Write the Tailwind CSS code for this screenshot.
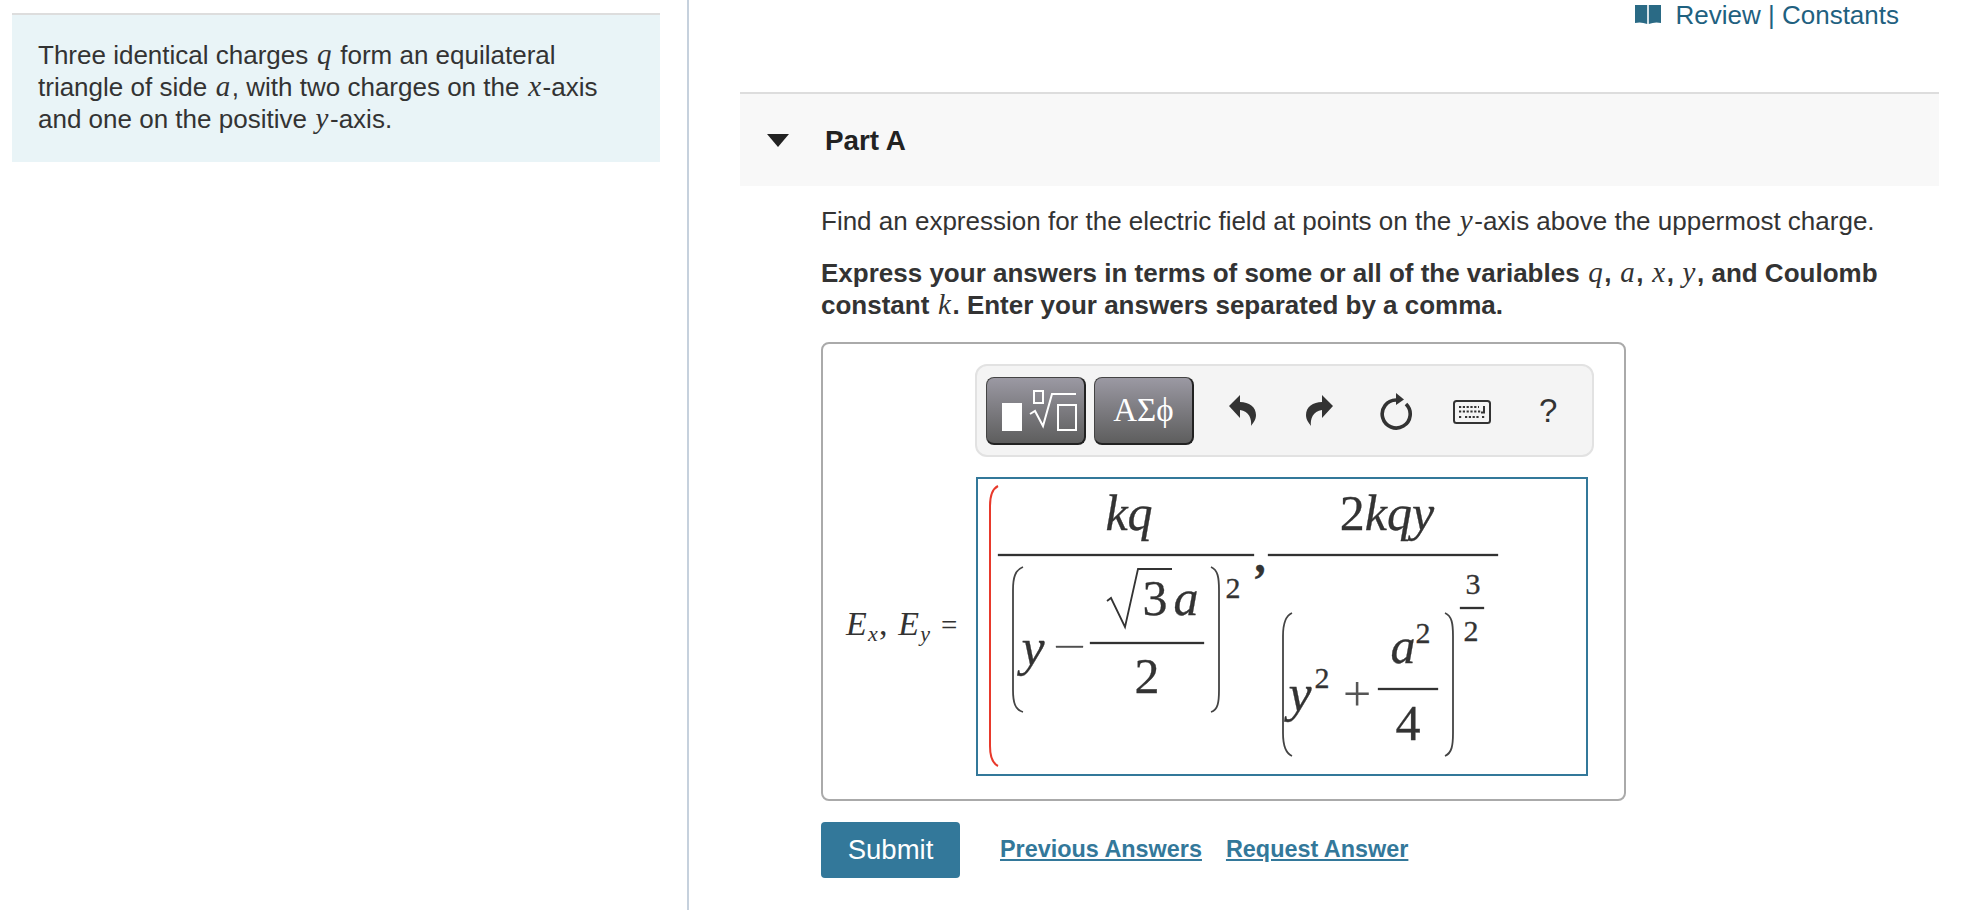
<!DOCTYPE html>
<html lang="en">
<head>
  <meta charset="UTF-8" />
  <meta name="viewport" content="width=device-width, initial-scale=1.0" />
  <title>Part A</title>
  <script src="https://cdn.jsdelivr.net/npm/@tailwindcss/browser@4"></script>
</head>
<body class="bg-white text-[#333] font-['Liberation_Sans',sans-serif] text-[26px] leading-[32px] h-[910px] overflow-hidden">
  <div class="flex h-[910px]">

    <!-- Intro column -->
    <aside class="w-[689px] shrink-0 border-r-2 border-[#c6d1dd] pt-[13px] pl-3">
      <div class="w-[648px] h-[149px] bg-[#e9f4f7] border-t-2 border-[#dddddd] pt-[24px] pl-[26px]">
        <p>Three identical charges <i class="font-['Liberation_Serif',serif] text-[29px] leading-none mx-[1.5px]">q</i> form an equilateral<br>triangle of side <i class="font-['Liberation_Serif',serif] text-[29px] leading-none mx-[1.5px]">a</i>, with two charges on the <i class="font-['Liberation_Serif',serif] text-[29px] leading-none mx-[1.5px]">x</i>-axis<br>and one on the positive <i class="font-['Liberation_Serif',serif] text-[29px] leading-none mx-[1.5px]">y</i>-axis.</p>
      </div>
    </aside>

    <!-- Question column -->
    <main class="flex-1 relative">
      <div class="h-[92px] flex justify-end pr-[67px] text-[#1f6180] text-[26px] leading-[30px]">
        <div class="flex items-start gap-[14px]">
          <svg class="mt-[5px]" width="26" height="19" viewBox="0 0 26 19"><path d="M0 0H12.2V19Q6 16.5 0 18Z" fill="#2a6a85"/><path d="M13.8 0H26V18Q20 16.5 13.8 19Z" fill="#2a6a85"/></svg>
          <span>Review | Constants</span>
        </div>
      </div>

      <header class="ml-[51px] mr-[27px] h-[94px] bg-[#f8f8f8] border-t-2 border-[#dddddd] flex items-center">
        <svg class="ml-[27px]" width="22" height="13" viewBox="0 0 22 13"><polygon points="0,0 22,0 11,13" fill="#222"/></svg>
        <h2 class="ml-[36px] mt-[2px] font-bold text-[27.8px] text-[#222]">Part A</h2>
      </header>

      <section class="ml-[132px] w-[1100px]">
        <p class="mt-[19px]">Find an expression for the electric field at points on the <i class="font-['Liberation_Serif',serif] text-[29px] leading-none mx-[1.5px]">y</i>-axis above the uppermost charge.</p>
        <p class="mt-[20px] font-bold">Express your answers in terms of some or all of the variables <i class="font-['Liberation_Serif',serif] text-[29px] leading-none mx-[1.5px] font-normal">q</i>, <i class="font-['Liberation_Serif',serif] text-[29px] leading-none mx-[1.5px] font-normal">a</i>, <i class="font-['Liberation_Serif',serif] text-[29px] leading-none mx-[1.5px] font-normal">x</i>, <i class="font-['Liberation_Serif',serif] text-[29px] leading-none mx-[1.5px] font-normal">y</i>, and Coulomb<br>constant <i class="font-['Liberation_Serif',serif] text-[29px] leading-none mx-[1.5px] font-normal">k</i>. Enter your answers separated by a comma.</p>

        <!-- Answer box -->
        <div class="mt-[21px] w-[805px] h-[459px] border-2 border-[#aaaaaa] rounded-[8px] pt-5">
          <div class="ml-[152px] w-[619px] h-[93px] bg-[#f4f4f4] border-2 border-[#e2e2e2] rounded-[12px] flex items-center pl-[9px]">
            <button class="w-[100px] h-[68px] rounded-[8px] border border-[#444] border-b-2 border-r-2 border-b-[#222] border-r-[#222] bg-gradient-to-b from-[#9b99a3] to-[#5e5e5e]">
              <svg width="95" height="64" viewBox="987 377 95 64">
                <rect x="1002" y="402" width="20" height="28" fill="#fff"/>
                <rect x="1034" y="390" width="9" height="12" fill="none" stroke="#fff" stroke-width="2"/>
                <path d="M1030 413L1035 410L1043 425L1052 393L1076 393" fill="none" stroke="#fff" stroke-width="2"/>
                <rect x="1058" y="404" width="18" height="25" fill="none" stroke="#fff" stroke-width="2"/>
              </svg>
            </button>
            <button class="ml-[8px] w-[100px] h-[68px] rounded-[8px] border border-[#444] border-b-2 border-r-2 border-b-[#222] border-r-[#222] bg-gradient-to-b from-[#9b99a3] to-[#5e5e5e] text-white font-['Liberation_Serif',serif] text-[33px]">ΑΣϕ</button>
            <svg class="ml-[35px]" width="27" height="32" viewBox="0 0 27 32"><path d="M0 11L11 0V7C20 7 27 12 27 20C27 25 24 28 22 31C23 24 20 16 11 15V23Z" fill="#333"/></svg>
            <svg class="ml-[50px]" width="27" height="32" viewBox="0 0 27 32"><path d="M27 11L16 0V7C7 7 0 12 0 20C0 25 3 28 5 31C4 24 7 16 16 15V23Z" fill="#333"/></svg>
            <svg class="ml-[46px] mt-[2px]" width="34" height="38" viewBox="0 0 34 38"><path d="M27 11A14 14 0 1 1 17 7" fill="none" stroke="#333" stroke-width="3.6"/><polygon points="17,0 25,6.500 17,12" fill="#333"/></svg>
            <svg class="ml-[40px] mt-[2px]" width="38" height="24" viewBox="0 0 38 24">
              <rect x="1" y="1" width="36" height="22" rx="2.500" fill="#f4f4f4" stroke="#333" stroke-width="2"/>
              <path d="M6 7H26M6 11.500H28M6 17H9M12 17H26M29 17H32" fill="none" stroke="#333" stroke-width="2.200" stroke-dasharray="2.200 1.600"/>
              <path d="M31 6V12.500H28" fill="none" stroke="#333" stroke-width="2"/>
            </svg>
            <span class="ml-[48px] text-[33px] text-[#333]">?</span>
          </div>

          <div class="mt-5 flex items-center">
            <div class="w-[153px] pl-[23px] mb-1 font-['Liberation_Serif',serif] text-[34px] tracking-[1.2px] text-[#333] whitespace-nowrap"><i>E</i><sub class="text-[22px] italic">x</sub>, <i>E</i><sub class="text-[22px] italic">y</sub> <span class="text-[29px]">=</span></div>
            <div class="w-[612px] h-[299px] border-2 border-[#33789a]">
              <!-- Equation editor draws its expression in an svg, coordinates are page px -->
              <svg class="font-['Liberation_Serif',serif]" width="608" height="295" viewBox="978 479 608 295" fill="#333" stroke="#333" stroke-width="0.3">
                <path d="M998 486C992 489 990 496 990 506L990 746C990 756 992 763 998 766" fill="none" stroke="#e8392b" stroke-width="2"/>

                <text x="1129" y="530" font-size="50" font-style="italic" text-anchor="middle">kq</text>
                <rect x="998" y="554" width="256" height="2"/>
                <path d="M1023 567C1015 570 1013 578 1013 590L1013 690C1013 702 1015 710 1023 712M1211 567C1218 570 1219 578 1219 590L1219 690C1219 702 1218 710 1211 712" fill="none" stroke="#444" stroke-width="1.800"/>
                <text x="1033" y="665" font-size="52" font-style="italic" text-anchor="middle">y</text>
                <rect x="1056" y="646" width="27" height="1.600" fill="#555"/>
                <path d="M1107 601L1111 598L1125 627L1138 569L1172 569" fill="none" stroke="#333" stroke-width="1.800"/>
                <text x="1155" y="615" font-size="50" text-anchor="middle">3</text>
                <text x="1186" y="615" font-size="50" font-style="italic" text-anchor="middle">a</text>
                <rect x="1090" y="642" width="114" height="2"/>
                <text x="1147" y="693" font-size="50" text-anchor="middle">2</text>
                <text x="1233" y="598" font-size="30" text-anchor="middle">2</text>
                <text x="1262" y="572" font-size="46" font-style="italic" font-weight="bold" text-anchor="middle">,</text>

                <text x="1387" y="530" font-size="50" font-style="italic" text-anchor="middle"><tspan font-style="normal">2</tspan>kqy</text>
                <rect x="1268" y="554" width="230" height="2"/>
                <text x="1473" y="594" font-size="30" text-anchor="middle">3</text>
                <rect x="1460" y="607" width="24" height="2"/>
                <text x="1471" y="641" font-size="30" text-anchor="middle">2</text>
                <path d="M1292 613C1285 616 1283 624 1283 636L1283 733C1283 745 1285 753 1292 756M1445 613C1452 616 1453 624 1453 636L1453 733C1453 745 1452 753 1445 756" fill="none" stroke="#444" stroke-width="1.800"/>
                <text x="1300" y="711" font-size="52" font-style="italic" text-anchor="middle">y</text>
                <text x="1322" y="688" font-size="30" text-anchor="middle">2</text>
                <text x="1357" y="711" font-size="50" fill="#555" stroke="none" text-anchor="middle">+</text>
                <text x="1403" y="663" font-size="50" font-style="italic" text-anchor="middle">a</text>
                <text x="1423" y="643" font-size="30" text-anchor="middle">2</text>
                <rect x="1378" y="688" width="60" height="2"/>
                <text x="1408" y="740" font-size="50" text-anchor="middle">4</text>
              </svg>
            </div>
          </div>
        </div>

        <div class="mt-[21px] flex items-center">
          <button class="w-[139px] h-[56px] bg-[#33789a] rounded-[4px] text-white text-[27.5px]">Submit</button>
          <a href="#" class="ml-[40px] mb-[3px] font-bold text-[#33789a] underline text-[23.4px]">Previous Answers</a>
          <a href="#" class="ml-[24px] mb-[3px] font-bold text-[#33789a] underline text-[23.4px]">Request Answer</a>
        </div>
      </section>
    </main>
  </div>
</body>
</html>
